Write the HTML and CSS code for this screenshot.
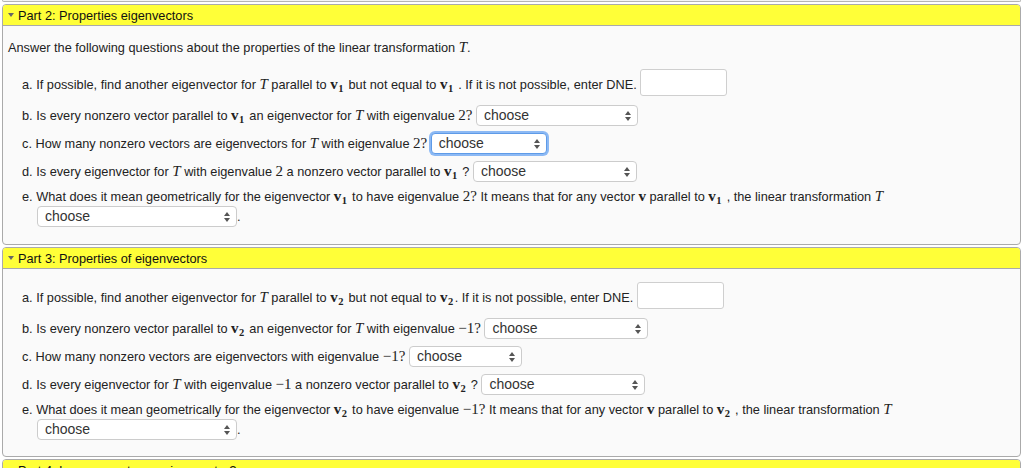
FILE: index.html
```html
<!DOCTYPE html>
<html>
<head>
<meta charset="utf-8">
<link rel="stylesheet" href="styles.css">
</head>
<body>
<div class="stub"></div>

<section class="panel">
  <div class="hdr"><svg class="tri" width="6" height="4" viewBox="0 0 6 4"><polygon points="0,0 6,0 3,4" fill="#666"/></svg>Part 2: Properties eigenvectors</div>
  <div class="body body-p2">
    <p class="intro">Answer the following questions about the properties of the linear transformation <span class="mi">T</span>.</p>
    <div class="qs">
      <div class="q qa">a. If possible, find another eigenvector for <span class="mi">T</span> parallel to <span class="mb">v<sub>1</sub></span> but not equal to <span class="mb">v<sub>1</sub></span> . If it is not possible, enter DNE. <span class="inp"></span></div>
      <div class="q">b. Is every nonzero vector parallel to <span class="mb">v<sub>1</sub></span> an eigenvector for <span class="mi">T</span> with eigenvalue <span class="mn">2?</span> <span class="sel w162">choose<svg class="arr" width="6" height="10" viewBox="0 0 6 10"><polygon points="0,4 3,0 6,4" fill="#555"/><polygon points="0,6 3,10 6,6" fill="#555"/></svg></span></div>
      <div class="q">c. How many nonzero vectors are eigenvectors for <span class="mi">T</span> with eigenvalue <span class="mn">2?</span> <span class="sel w116 focus">choose<svg class="arr" width="6" height="10" viewBox="0 0 6 10"><polygon points="0,4 3,0 6,4" fill="#555"/><polygon points="0,6 3,10 6,6" fill="#555"/></svg></span></div>
      <div class="q">d. Is every eigenvector for <span class="mi">T</span> with eigenvalue <span class="mn">2</span> a nonzero vector parallel to <span class="mb">v<sub>1</sub></span> ? <span class="sel w164">choose<svg class="arr" width="6" height="10" viewBox="0 0 6 10"><polygon points="0,4 3,0 6,4" fill="#555"/><polygon points="0,6 3,10 6,6" fill="#555"/></svg></span></div>
      <div class="q qe">e. What does it mean geometrically for the eigenvector <span class="mb">v<sub>1</sub></span> to have eigenvalue <span class="mn">2?</span> It means that for any vector <span class="mb">v</span> parallel to <span class="mb">v<sub>1</sub></span> , the linear transformation <span class="mi">T</span></div>
      <div class="q qe-sel"><span class="sel w200">choose<svg class="arr" width="6" height="10" viewBox="0 0 6 10"><polygon points="0,4 3,0 6,4" fill="#555"/><polygon points="0,6 3,10 6,6" fill="#555"/></svg></span>.</div>
    </div>
  </div>
</section>

<section class="panel">
  <div class="hdr"><svg class="tri" width="6" height="4" viewBox="0 0 6 4"><polygon points="0,0 6,0 3,4" fill="#666"/></svg>Part 3: Properties of eigenvectors</div>
  <div class="body body-p3">
    <div class="qs">
      <div class="q qa">a. If possible, find another eigenvector for <span class="mi">T</span> parallel to <span class="mb">v<sub>2</sub></span> but not equal to <span class="mb">v<sub>2</sub></span>. If it is not possible, enter DNE. <span class="inp"></span></div>
      <div class="q">b. Is every nonzero vector parallel to <span class="mb">v<sub>2</sub></span> an eigenvector for <span class="mi">T</span> with eigenvalue <span class="mn">&minus;1?</span> <span class="sel w164">choose<svg class="arr" width="6" height="10" viewBox="0 0 6 10"><polygon points="0,4 3,0 6,4" fill="#555"/><polygon points="0,6 3,10 6,6" fill="#555"/></svg></span></div>
      <div class="q">c. How many nonzero vectors are eigenvectors with eigenvalue <span class="mn">&minus;1?</span> <span class="sel w113">choose<svg class="arr" width="6" height="10" viewBox="0 0 6 10"><polygon points="0,4 3,0 6,4" fill="#555"/><polygon points="0,6 3,10 6,6" fill="#555"/></svg></span></div>
      <div class="q">d. Is every eigenvector for <span class="mi">T</span> with eigenvalue <span class="mn">&minus;1</span> a nonzero vector parallel to <span class="mb">v<sub>2</sub></span> ? <span class="sel w164">choose<svg class="arr" width="6" height="10" viewBox="0 0 6 10"><polygon points="0,4 3,0 6,4" fill="#555"/><polygon points="0,6 3,10 6,6" fill="#555"/></svg></span></div>
      <div class="q qe">e. What does it mean geometrically for the eigenvector <span class="mb">v<sub>2</sub></span> to have eigenvalue <span class="mn">&minus;1?</span> It means that for any vector <span class="mb">v</span> parallel to <span class="mb">v<sub>2</sub></span> , the linear transformation <span class="mi">T</span></div>
      <div class="q qe-sel"><span class="sel w200">choose<svg class="arr" width="6" height="10" viewBox="0 0 6 10"><polygon points="0,4 3,0 6,4" fill="#555"/><polygon points="0,6 3,10 6,6" fill="#555"/></svg></span>.</div>
    </div>
  </div>
</section>

<section class="panel">
  <div class="hdr"><svg class="tri" width="6" height="4" viewBox="0 0 6 4"><polygon points="0,0 6,0 3,4" fill="#666"/></svg>Part 4: Is every vector an eigenvector?</div>
  <div class="body body-p3">
    <p class="intro">&nbsp;</p>
  </div>
</section>
</body>
</html>
```

FILE: styles.css
```css
html, body {
  background: #ffffff;
}
body {
  margin: 0 3px 0 2px;
  font-family: "Liberation Sans", Arial, Helvetica, sans-serif;
  font-size: 12.75px;
  color: #222;
}
.stub {
  height: 1px;
  border: 1px solid #b4b4b4;
  border-top: 0;
  border-radius: 0 0 4px 4px;
  background: #f4f4f4;
  margin-bottom: 2px;
}
.panel {
  border: 1px solid #aaaaaa;
  border-radius: 4px;
  background: #fafafa;
  margin-bottom: 2px;
  overflow: hidden;
}
.hdr {
  height: 20px;
  background: #ffff38;
  border-bottom: 1px solid #aaaaaa;
  padding-left: 5px;
  display: flex;
  align-items: center;
  color: #111;
  font-size: 12.75px;
}
.tri {
  margin-right: 4px;
  flex: none;
}
.body {
  padding: 14px 5px 15px;
}
.body-p3 {
  padding: 13px 5px 14px;
}
.intro {
  margin: 0 0 13px;
  line-height: 16px;
}
.qs {
  padding-left: 14px;
}
.q {
  line-height: 16px;
  margin-bottom: 5px;
  white-space: nowrap;
}
.qa {
  margin-bottom: 2px;
}
.qe {
  margin-bottom: 1px;
}
.qe-sel {
  padding-left: 15px;
  margin-bottom: 0;
}
.mi {
  font-family: "Liberation Serif", "Times New Roman", serif;
  font-style: italic;
  font-size: 15px;
  line-height: 0;
}
.mn {
  font-family: "Liberation Serif", "Times New Roman", serif;
  font-size: 15px;
  line-height: 0;
}
.mb {
  font-family: "Liberation Serif", "Times New Roman", serif;
  font-weight: bold;
  font-size: 15px;
  line-height: 0;
}
.mb sub {
  font-size: 10.5px;
  vertical-align: -3px;
  line-height: 0;
  margin-left: 0.5px;
  margin-right: 1.5px;
}
.inp {
  display: inline-block;
  box-sizing: border-box;
  width: 87px;
  height: 27px;
  border: 1px solid #cfcfcf;
  border-radius: 3px;
  background: #fff;
  vertical-align: middle;
  margin-bottom: 7px;
}
.sel {
  display: inline-flex;
  align-items: center;
  justify-content: space-between;
  box-sizing: border-box;
  height: 21px;
  border: 1px solid #cccccc;
  border-radius: 4px;
  background: #ffffff;
  font-size: 14px;
  line-height: 19px;
  padding: 0 6px 0 7px;
  color: #333;
  vertical-align: middle;
  margin-bottom: 2px;
}
.sel.focus {
  border-color: #5e9be8;
  box-shadow: 0 0 0 2px #8cb9f4;
}
.arr {
  flex: none;
}
.w113 { width: 113px; }
.w116 { width: 116px; }
.w162 { width: 162px; }
.w164 { width: 164px; }
.w200 { width: 200px; }
```
